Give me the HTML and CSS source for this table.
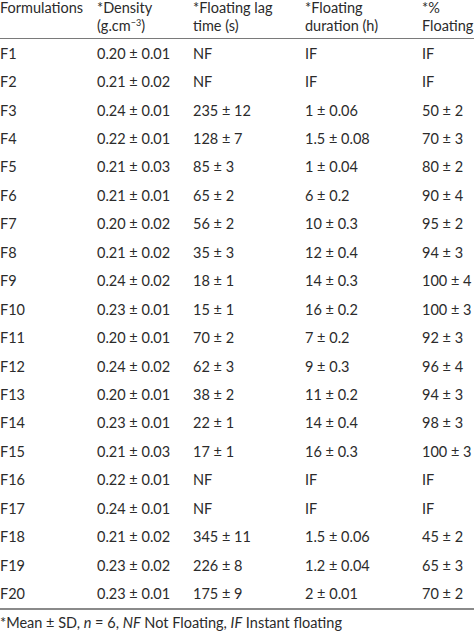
FILE: index.html
```html
<!DOCTYPE html>
<html>
<head>
<meta charset="utf-8">
<link rel="stylesheet" href="styles.css">
</head>
<body>
<div class="table">
  <div class="row head">
    <div class="c">Formulations</div>
    <div class="c">*Density<br>(g.cm<sup>−3</sup>)</div>
    <div class="c">*Floating lag<br>time (s)</div>
    <div class="c">*Floating<br>duration (h)</div>
    <div class="c">*%<br>Floating</div>
  </div>
  <div class="body">
    <div class="row"><div class="c">F1</div><div class="c">0.20 ± 0.01</div><div class="c">NF</div><div class="c">IF</div><div class="c">IF</div></div>
    <div class="row"><div class="c">F2</div><div class="c">0.21 ± 0.02</div><div class="c">NF</div><div class="c">IF</div><div class="c">IF</div></div>
    <div class="row"><div class="c">F3</div><div class="c">0.24 ± 0.01</div><div class="c">235 ± 12</div><div class="c">1 ± 0.06</div><div class="c">50 ± 2</div></div>
    <div class="row"><div class="c">F4</div><div class="c">0.22 ± 0.01</div><div class="c">128 ± 7</div><div class="c">1.5 ± 0.08</div><div class="c">70 ± 3</div></div>
    <div class="row"><div class="c">F5</div><div class="c">0.21 ± 0.03</div><div class="c">85 ± 3</div><div class="c">1 ± 0.04</div><div class="c">80 ± 2</div></div>
    <div class="row"><div class="c">F6</div><div class="c">0.21 ± 0.01</div><div class="c">65 ± 2</div><div class="c">6 ± 0.2</div><div class="c">90 ± 4</div></div>
    <div class="row"><div class="c">F7</div><div class="c">0.20 ± 0.02</div><div class="c">56 ± 2</div><div class="c">10 ± 0.3</div><div class="c">95 ± 2</div></div>
    <div class="row"><div class="c">F8</div><div class="c">0.21 ± 0.02</div><div class="c">35 ± 3</div><div class="c">12 ± 0.4</div><div class="c">94 ± 3</div></div>
    <div class="row"><div class="c">F9</div><div class="c">0.24 ± 0.02</div><div class="c">18 ± 1</div><div class="c">14 ± 0.3</div><div class="c">100 ± 4</div></div>
    <div class="row"><div class="c">F10</div><div class="c">0.23 ± 0.01</div><div class="c">15 ± 1</div><div class="c">16 ± 0.2</div><div class="c">100 ± 3</div></div>
    <div class="row"><div class="c">F11</div><div class="c">0.20 ± 0.01</div><div class="c">70 ± 2</div><div class="c">7 ± 0.2</div><div class="c">92 ± 3</div></div>
    <div class="row"><div class="c">F12</div><div class="c">0.24 ± 0.02</div><div class="c">62 ± 3</div><div class="c">9 ± 0.3</div><div class="c">96 ± 4</div></div>
    <div class="row"><div class="c">F13</div><div class="c">0.20 ± 0.01</div><div class="c">38 ± 2</div><div class="c">11 ± 0.2</div><div class="c">94 ± 3</div></div>
    <div class="row"><div class="c">F14</div><div class="c">0.23 ± 0.01</div><div class="c">22 ± 1</div><div class="c">14 ± 0.4</div><div class="c">98 ± 3</div></div>
    <div class="row"><div class="c">F15</div><div class="c">0.21 ± 0.03</div><div class="c">17 ± 1</div><div class="c">16 ± 0.3</div><div class="c">100 ± 3</div></div>
    <div class="row"><div class="c">F16</div><div class="c">0.22 ± 0.01</div><div class="c">NF</div><div class="c">IF</div><div class="c">IF</div></div>
    <div class="row"><div class="c">F17</div><div class="c">0.24 ± 0.01</div><div class="c">NF</div><div class="c">IF</div><div class="c">IF</div></div>
    <div class="row"><div class="c">F18</div><div class="c">0.21 ± 0.02</div><div class="c">345 ± 11</div><div class="c">1.5 ± 0.06</div><div class="c">45 ± 2</div></div>
    <div class="row"><div class="c">F19</div><div class="c">0.23 ± 0.02</div><div class="c">226 ± 8</div><div class="c">1.2 ± 0.04</div><div class="c">65 ± 3</div></div>
    <div class="row"><div class="c">F20</div><div class="c">0.23 ± 0.01</div><div class="c">175 ± 9</div><div class="c">2 ± 0.01</div><div class="c">70 ± 2</div></div>
  </div>
  <div class="foot">*Mean ± SD, <i>n</i> = 6, <i>NF</i> Not Floating, <i>IF</i> Instant floating</div>
</div>
</body>
</html>
```

FILE: styles.css
```css
html, body {
  margin: 0;
  padding: 0;
  background: #ffffff;
}
body {
  font-family: Lato, "Open Sans", sans-serif;
  font-size: 14.5px;
  color: #2b2b2b;
  width: 474px;
  overflow: hidden;
}
.table {
  margin-top: -1px;
}
.row {
  display: grid;
  grid-template-columns: 97px 96px 112px 117px 1fr;
}
.head {
  line-height: 18px;
  padding-bottom: 3px;
  border-bottom: 1px solid #7a7a7a;
}
.head sup {
  font-size: 9px;
  line-height: 0;
  vertical-align: 5px;
}
.body .row {
  height: 28.45px;
  align-items: center;
}
.body {
  border-bottom: 2px solid #8a8a8a;
}
.c {
  white-space: nowrap;
}
.foot {
  line-height: 18px;
  padding-top: 4px;
}
```
